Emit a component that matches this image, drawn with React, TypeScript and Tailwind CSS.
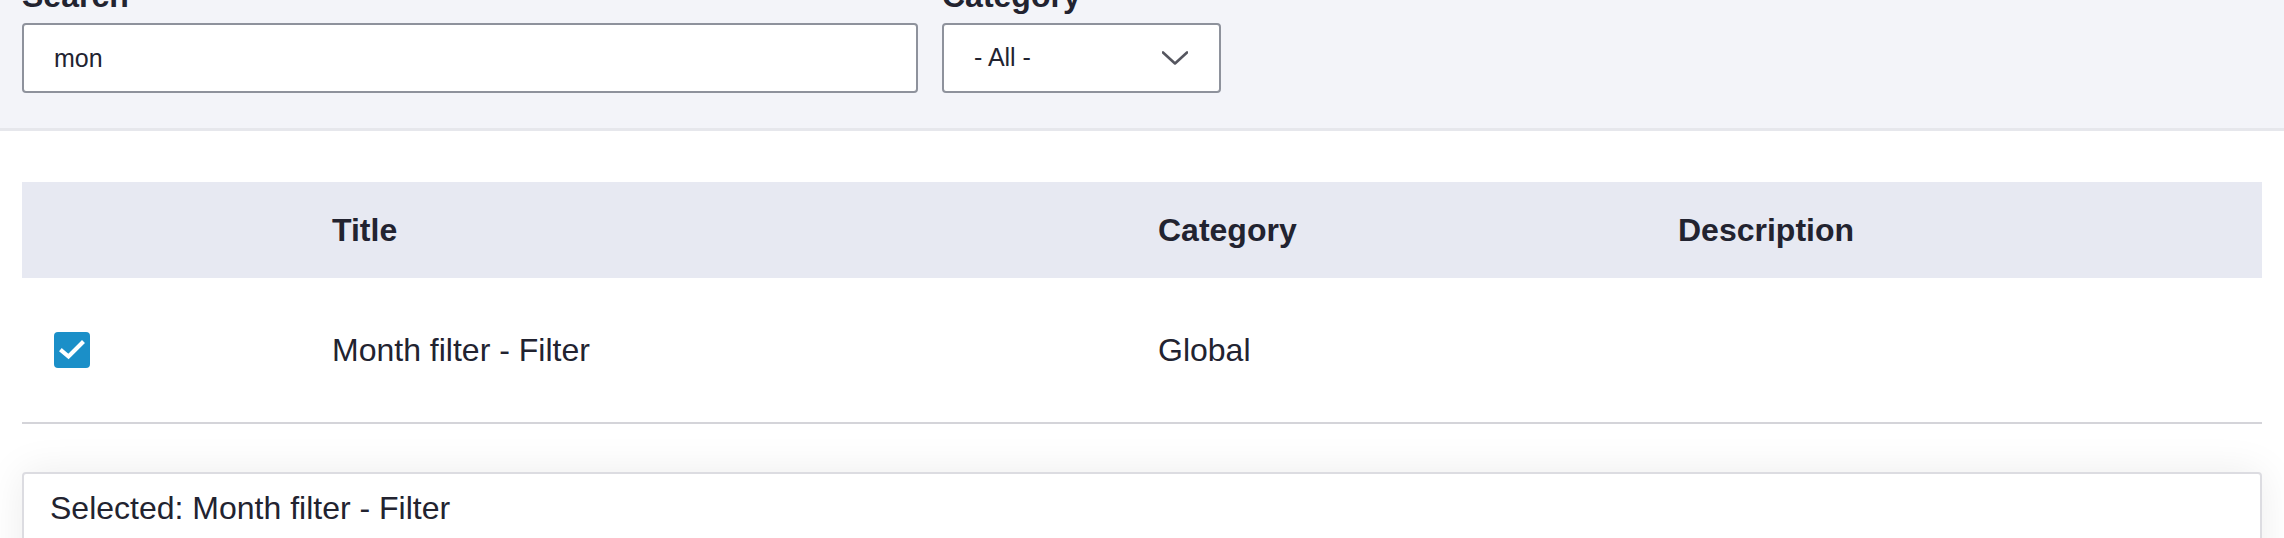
import { useState } from "react";

const columns = "grid grid-cols-[278px_826px_520px_1fr]";

function ChevronDown() {
  return (
    <svg width="26" height="14" viewBox="0 0 26 14" fill="none" aria-hidden="true">
      <path d="M1 1.5 L13 12.5 L25 1.5" stroke="#55565f" strokeWidth="2.6" strokeLinecap="round" strokeLinejoin="round" />
    </svg>
  );
}

function Checkbox({ checked }: { checked: boolean }) {
  return (
    <span className="flex h-[36px] w-[36px] items-center justify-center rounded-[4px] bg-[#1b8fc8]">
      {checked && (
        <svg width="36" height="36" viewBox="0 0 36 36" fill="none" aria-hidden="true">
          <path d="M8 19 L14.5 24.5 L28 11" stroke="#ffffff" strokeWidth="4.2" strokeLinecap="square" />
        </svg>
      )}
    </span>
  );
}

export default function App() {
  const [query] = useState("mon");
  const rows = [{ title: "Month filter - Filter", category: "Global", description: "" }];

  return (
    <main className="min-h-screen overflow-hidden bg-white text-[#222330] font-['Liberation_Sans',Arial,sans-serif]">
      {/* Filters */}
      <section className="flex gap-[24px] border-b-[3px] border-[#e6e7ec] bg-[#f3f4f9] px-[22px] pb-[35px]">
        <div className="flex flex-col">
          <label className="-mt-[24px] mb-[7px] text-[32px] font-bold leading-[40px]">Search</label>
          <input
            readOnly
            value={query}
            className="h-[70px] w-[896px] rounded-[4px] border-2 border-[#8e929c] bg-white px-[30px] text-[25px] text-[#222330] outline-none"
          />
        </div>
        <div className="flex flex-col">
          <label className="-mt-[24px] mb-[7px] text-[32px] font-bold leading-[40px]">Category</label>
          <div className="flex h-[70px] w-[279px] items-center justify-between rounded-[4px] border-2 border-[#8e929c] bg-white pl-[30px] pr-[31px] text-[25px]">
            <span>- All -</span>
            <ChevronDown />
          </div>
        </div>
      </section>

      {/* Table */}
      <div className="mx-[22px] mt-[51px]">
        <div className={`${columns} h-[96px] items-center bg-[#e7e9f2] text-[32px] font-bold`}>
          <div />
          <div className="px-[32px]">Title</div>
          <div className="px-[32px]">Category</div>
          <div className="px-[32px]">Description</div>
        </div>
        {rows.map((row) => (
          <div key={row.title} className={`${columns} h-[146px] items-center border-b-2 border-[#d4d4d9] text-[32px]`}>
            <div className="px-[32px]">
              <Checkbox checked />
            </div>
            <div className="px-[32px]">{row.title}</div>
            <div className="px-[32px]">{row.category}</div>
            <div className="px-[32px]">{row.description}</div>
          </div>
        ))}
      </div>

      {/* Selection summary */}
      <div className="mx-[22px] mt-[48px] h-[200px] rounded-[4px] border-2 border-[#dcdce1] bg-white pl-[26px] pt-[10px] text-[32px] leading-[48px] shadow-[0_0_40px_rgba(0,0,0,0.08)]">
        Selected: {rows[0].title}
      </div>
    </main>
  );
}
